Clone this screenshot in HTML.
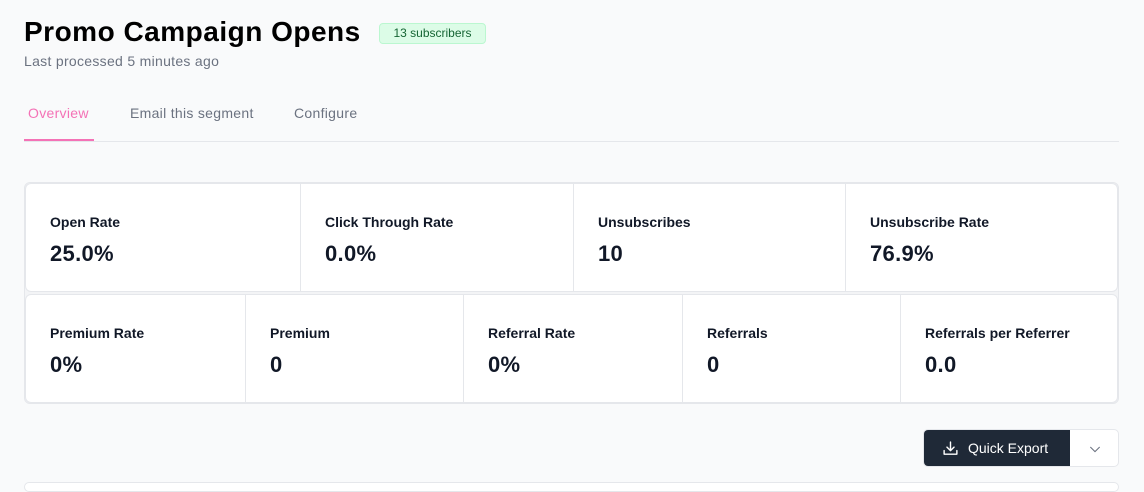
<!DOCTYPE html><html><head><style>
*{box-sizing:border-box;margin:0;padding:0}
body{width:1144px;height:486px;overflow:hidden;background:#f9fafb;font-family:"Liberation Sans",sans-serif;position:relative}
.a{position:absolute}
h1{position:absolute;left:24px;top:16px;font-size:28px;font-weight:700;color:#000;letter-spacing:0.5px}
.badge{left:379px;top:23px;height:21px;width:107px;background:#dcfce7;border:1px solid #bbf7d0;border-radius:4px;color:#166534;font-size:12px;line-height:19px;text-align:center}
.sub{left:24px;top:53px;font-size:14px;color:#6b7280;letter-spacing:0.3px}
.tab{top:105px;font-size:14px;color:#6b7280;letter-spacing:0.3px}
.outer{left:24px;top:182px;width:1095px;height:222px;border:1px solid #e5e7eb;border-radius:6px;background:#f3f4f6}
.row{position:absolute;left:0;width:1093px;height:109px;background:#fff;border:1px solid #e5e7eb;border-radius:6px;display:flex;overflow:hidden}
.c{border-right:1px solid #e5e7eb;padding:30px 0 0 24px;height:100%}
.c:last-child{border-right:none}
.l{font-size:14px;font-weight:700;color:#111827}
.v{font-size:22px;font-weight:700;color:#111827;margin-top:11px;letter-spacing:0.3px}
</style></head><body>
<h1>Promo Campaign Opens</h1>
<div class="a badge">13 subscribers</div>
<div class="a sub">Last processed 5 minutes ago</div>
<div class="a tab" style="left:28px;color:#f472b6">Overview</div>
<div class="a tab" style="left:130px">Email this segment</div>
<div class="a tab" style="left:294px">Configure</div>
<div class="a" style="left:24px;top:141px;width:1095px;height:1px;background:#e5e7eb"></div>
<div class="a" style="left:24px;top:139px;width:70px;height:2px;background:#f472b6"></div>
<div class="a outer">
<div class="row" style="top:0">
<div class="c" style="width:275px"><div class="l">Open Rate</div><div class="v">25.0%</div></div>
<div class="c" style="width:273px"><div class="l">Click Through Rate</div><div class="v">0.0%</div></div>
<div class="c" style="width:272px"><div class="l">Unsubscribes</div><div class="v">10</div></div>
<div class="c" style="flex:1"><div class="l">Unsubscribe Rate</div><div class="v">76.9%</div></div>
</div>
<div class="row" style="top:111px">
<div class="c" style="width:220px"><div class="l">Premium Rate</div><div class="v">0%</div></div>
<div class="c" style="width:218px"><div class="l">Premium</div><div class="v">0</div></div>
<div class="c" style="width:219px"><div class="l">Referral Rate</div><div class="v">0%</div></div>
<div class="c" style="width:218px"><div class="l">Referrals</div><div class="v">0</div></div>
<div class="c" style="flex:1"><div class="l">Referrals per Referrer</div><div class="v">0.0</div></div>
</div>
</div>
<div class="a" style="left:923px;top:429px;width:196px;height:38px;border:1px solid #e5e7eb;border-radius:5px;background:#fff;overflow:hidden">
<div style="position:absolute;left:0;top:0;width:146px;height:38px;background:#1f2937;color:#fff;font-size:14px;line-height:36px;padding-left:44px">Quick Export</div>
<svg style="position:absolute;left:18px;top:10px" width="17" height="17" viewBox="0 0 24 24" fill="none" stroke="#fff" stroke-width="2" stroke-linecap="round" stroke-linejoin="round"><path d="M3 15v5h18v-5M12 3v12M7 10l5 5 5-5"/></svg>
<svg style="position:absolute;left:163px;top:11px" width="16" height="16" viewBox="0 0 24 24" fill="none" stroke="#6b7280" stroke-width="1.6"><path d="M5 9l7 7 7-7"/></svg>
</div>
<div class="a" style="left:24px;top:482px;width:1095px;height:10px;background:#fff;border:1px solid #e5e7eb;border-radius:6px"></div>
</body></html>
